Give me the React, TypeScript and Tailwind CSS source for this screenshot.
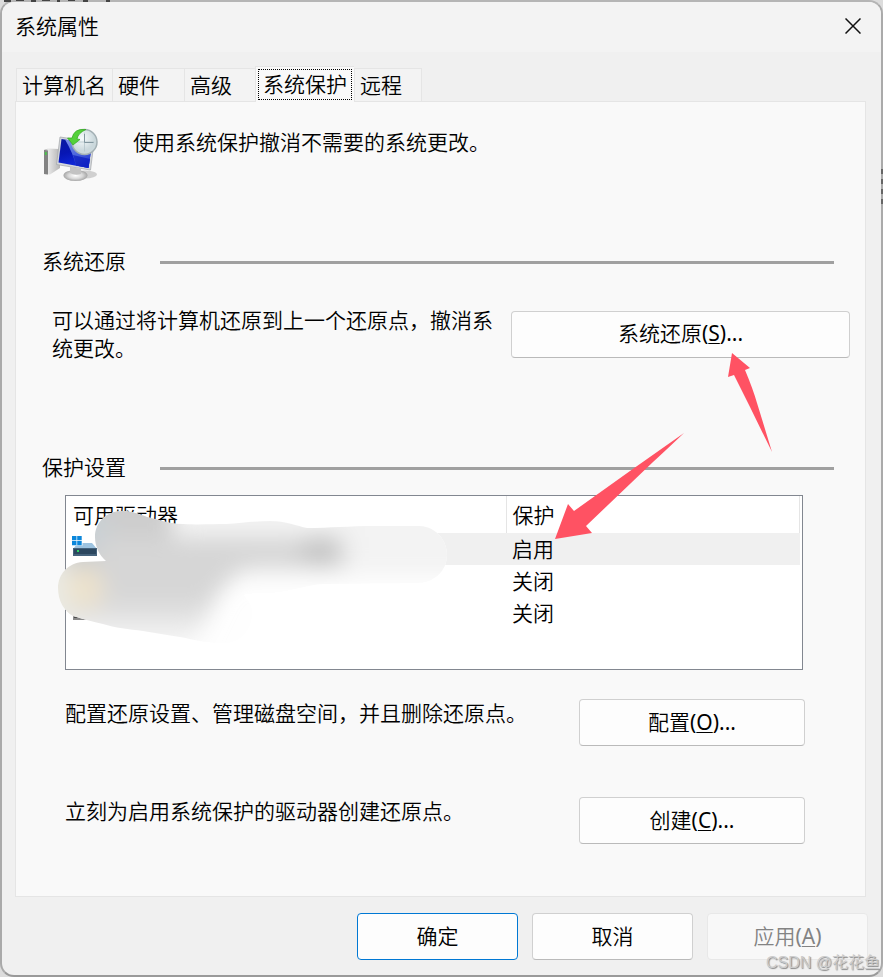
import { useState } from "react";
import type { ReactNode } from "react";
import clsx from "clsx";

const tabs = [
  { id: "computer", label: "计算机名", size: "w-[96px]" },
  { id: "hardware", label: "硬件", size: "w-[72px]" },
  { id: "advanced", label: "高级", size: "w-[71px]" },
  { id: "protection", label: "系统保护", size: "w-[99px]" },
  { id: "remote", label: "远程", size: "w-[68px]" },
];

const drives = [
  { id: "c", status: "启用", icon: <SystemDriveIcon /> },
  { id: "d", status: "关闭", icon: null },
  { id: "e", status: "关闭", icon: <DriveIcon /> },
];

type PushButtonProps = {
  children: ReactNode;
  className?: string;
  primary?: boolean;
  disabled?: boolean;
};

function PushButton({ children, className, primary, disabled }: PushButtonProps) {
  return (
    <button
      type="button"
      disabled={disabled}
      className={clsx(
        "h-[47px] shrink-0 rounded border pb-0.5 leading-7",
        primary && "border-[#0078d4] bg-[#fdfdfd]",
        disabled && "border-[#e8e8e8] bg-[#f8f8f8] text-[#838383]",
        !primary && !disabled && "border-[#d0d0d0] border-b-[#bababa] bg-[#fdfdfd]",
        className
      )}
    >
      {children}
    </button>
  );
}

function Mnemonic({ letter, dots }: { letter: string; dots?: boolean }) {
  return (
    <span className="font-normal">
      (<span className="underline decoration-1 underline-offset-2">{letter}</span>){dots && "..."}
    </span>
  );
}

function SectionTitle({ children }: { children: ReactNode }) {
  return (
    <div className="ml-[26px] mr-[31px] flex items-center gap-[34px]">
      <h2 className="pb-0.5 font-[350]">{children}</h2>
      <div className="h-[3px] flex-1 bg-[#a0a0a0]" />
    </div>
  );
}

function RestoreIcon() {
  return (
    <svg width="56" height="54" viewBox="0 0 56 54" className="shrink-0" aria-hidden="true">
      <defs>
        <linearGradient id="tower" x1="0" y1="0" x2="1" y2="0">
          <stop offset="0" stopColor="#8d8d8d" />
          <stop offset="0.25" stopColor="#e9e9e9" />
          <stop offset="1" stopColor="#b5b5b5" />
        </linearGradient>
        <linearGradient id="screen" x1="0" y1="0" x2="0.3" y2="1">
          <stop offset="0" stopColor="#0a1a9e" />
          <stop offset="0.5" stopColor="#0716b4" />
          <stop offset="1" stopColor="#1029dc" />
        </linearGradient>
        <linearGradient id="glare" x1="0" y1="0" x2="0.6" y2="1">
          <stop offset="0" stopColor="#7d94ea" />
          <stop offset="0.6" stopColor="#4a63dc" />
          <stop offset="1" stopColor="#1c33d2" />
        </linearGradient>
        <radialGradient id="stand">
          <stop offset="0" stopColor="#ffffff" />
          <stop offset="0.6" stopColor="#d8d8d8" />
          <stop offset="1" stopColor="#a6a6a6" />
        </radialGradient>
        <radialGradient id="clock" cx="0.4" cy="0.35">
          <stop offset="0" stopColor="#f8fcfd" />
          <stop offset="1" stopColor="#cbd8dc" />
        </radialGradient>
      </defs>
      <ellipse cx="41" cy="46.500" rx="12" ry="4" fill="#d0d0d0" />
      <path d="M0 22 L4 20.500 L16 21 L16 40 L6 46.500 L0 46 Z" fill="url(#tower)" />
      <path d="M0 22 L4 22.500 L4 46.500 L0 46 Z" fill="#838383" />
      <rect x="0.800" y="24" width="2" height="3" fill="#4fbf4f" />
      <ellipse cx="31.500" cy="47.500" rx="12" ry="5.500" fill="url(#stand)" />
      <path d="M26 39 L37 41 L37 46 Q31 48 26 45 Z" fill="#c3c3c3" />
      <path d="M16 9 L50 14 L46.500 42 L12.500 36.500 Z" fill="#d5d8dc" stroke="#a2a5a8" strokeWidth="0.700" />
      <path d="M17.500 11 L48 16 L44.500 40 L14.500 34.500 Z" fill="url(#screen)" />
      <path d="M21 11.500 L48 16 L44.500 40 L32 37.500 Q29 25 21 11.500 Z" fill="url(#glare)" />
      <path d="M32 37.500 Q31 32 29 27 L46 31 L44.500 40 Z" fill="#0919bd" opacity="0.700" />
      <circle cx="40.500" cy="14" r="12.500" fill="url(#clock)" stroke="#a3b0b4" strokeWidth="1.500" />
      <path d="M40.500 4.500v19M31 14h19" stroke="#b5c5ca" strokeWidth="0.800" />
      <path d="M40.500 6v8.500h9" fill="none" stroke="#8397a0" strokeWidth="1" />
      <path d="M42 1.500 Q30 0 28 10 L23.500 10 L29 17 L36 11.500 L33 11 Q34 5 42 1.500 Z" fill="#54d13a" stroke="#35a824" strokeWidth="0.700" />
    </svg>
  );
}

function SystemDriveIcon() {
  return (
    <svg width="26" height="22" viewBox="0 0 26 22" aria-hidden="true">
      <path d="M6 8h14l5 6H1Z" fill="#9dc3e0" />
      <rect x="1" y="13" width="24" height="8" fill="#46637c" />
      <rect x="2" y="14" width="22" height="5" fill="#2c475f" />
      <rect x="5" y="15" width="2" height="2" fill="#2fd765" />
      <path d="M0 0h10.500v10.500H0Z" fill="#ffffff" />
      <path d="M0 1h4.500v4.200H0ZM5.200 1h4.500v4.200H5.200ZM0 6h4.500v4.200H0ZM5.200 6h4.500v4.200H5.200Z" fill="#0c87db" />
    </svg>
  );
}

function DriveIcon() {
  return (
    <svg width="26" height="22" viewBox="0 0 26 22" aria-hidden="true">
      <path d="M6 8h14l5 6H1Z" fill="#c2c2c2" />
      <rect x="1" y="13" width="24" height="8" fill="#8a8a8a" />
      <rect x="2" y="14" width="22" height="5" fill="#4b4b4b" />
    </svg>
  );
}

// Brush stroke hiding the drive names
function Smudge() {
  return (
    <svg
      width="390"
      height="134"
      viewBox="58 510 390 134"
      className="pointer-events-none absolute -left-2 top-[14px]"
      aria-hidden="true"
    >
      <defs>
        <clipPath id="brush">
          <path d="M95 537 C95 522 107 511 122 511 C136 511 144 517 155 519 C165 522 174 524 183 524 C200 525 212 524 227 524 C242 523 256 521 270 521 C286 521 297 526 307 528 C330 528 350 526 373 526 L420 526 C436 527 447 540 447 555 C447 571 434 583 417 583 L323 584 C307 585 294 590 280 592 C266 594 252 592 243 595 C249 600 252 606 252 613 C252 631 239 644 223 643 C207 643 195 640 180 637 C167 635 155 633 143 631 C129 629 115 628 103 624 C91 621 82 619 73 616 C64 611 58 601 58 588 C58 574 68 563 83 562 L106 561 C99 555 95 546 95 537 Z" />
        </clipPath>
        <filter id="soft" x="-50%" y="-50%" width="200%" height="200%">
          <feGaussianBlur stdDeviation="11" />
        </filter>
        <linearGradient id="fade" gradientUnits="userSpaceOnUse" x1="0" y1="575" x2="0" y2="640">
          <stop offset="0" stopColor="#cecece" />
          <stop offset="0.5" stopColor="#dcdcdc" />
          <stop offset="1" stopColor="#f6f6f6" />
        </linearGradient>
      </defs>
      <g clipPath="url(#brush)">
        <rect x="58" y="510" width="390" height="134" fill="#fefefe" />
        <g filter="url(#soft)">
          <rect x="180" y="500" width="300" height="75" fill="#f3f3f3" />
          <rect x="60" y="480" width="114" height="90" fill="#cdcdcd" />
          <ellipse cx="88" cy="530" rx="22" ry="25" fill="#c9d0d4" />
          <path d="M60 560 H235 L190 650 H60 Z" fill="url(#fade)" />
          <path d="M100 537 H345 V568 H245 L215 594 H100 Z" fill="#d6d6d6" />
          <ellipse cx="320" cy="550" rx="20" ry="15" fill="#c4c4c4" />
          <ellipse cx="50" cy="595" rx="22" ry="45" fill="#eaeae4" />
          <ellipse cx="85" cy="588" rx="19" ry="22" fill="#ece2cc" />
        </g>
      </g>
    </svg>
  );
}

export default function App() {
  const [activeTab, setActiveTab] = useState("protection");

  return (
    <div className="relative bg-[#dcdcdc] font-['Noto_Sans','Noto_Sans_CJK_SC',sans-serif] text-[21px] font-[350] leading-7 text-black">
      <div className="overflow-hidden rounded-[14px] border-2 border-[#aaaaaa] border-b-[#999999] border-t-[#b5b5b5] bg-[#f0f0f0]">
        <header className="flex h-[50px] items-center justify-between bg-[#f3f3f3] pb-0.5 pl-[13px] pr-5">
          <h1 className="font-[350]">系统属性</h1>
          <button type="button" aria-label="关闭">
            <svg width="16" height="16" viewBox="0 0 16 16" aria-hidden="true">
              <path d="M0.500 0.500l15 15M15.500 0.500l-15 15" stroke="#111" strokeWidth="1.500" />
            </svg>
          </button>
        </header>

        <main className="pl-[13px] pr-[15px] pt-[14px]">
          <div role="tablist" className="flex items-end px-px">
            {tabs.map((tab) => (
              <button
                key={tab.id}
                type="button"
                role="tab"
                aria-selected={tab.id === activeTab}
                onClick={() => setActiveTab(tab.id)}
                className={clsx(
                  "shrink-0 whitespace-nowrap border-l border-t border-[#e5e5e5] text-left last:border-r",
                  tab.size,
                  tab.id === activeTab
                    ? "relative -mb-px h-9 bg-[#f9f9f9] p-0.5"
                    : "h-[33px] bg-[#f3f3f3] pl-[5px]"
                )}
              >
                {tab.id === activeTab ? (
                  <span className="block h-[31px] border border-dotted border-black pl-1">
                    {tab.label}
                  </span>
                ) : (
                  tab.label
                )}
              </button>
            ))}
          </div>

          <section role="tabpanel" className="border border-[#e5e5e5] bg-[#f9f9f9] pb-[52px] pt-[26px]">
            <div className="flex items-start gap-[33px] pl-7">
              <RestoreIcon />
              <p>使用系统保护撤消不需要的系统更改。</p>
            </div>

            <div className="mt-[65px]">
              <SectionTitle>系统还原</SectionTitle>
              <div className="mt-[29px] flex items-center gap-4 pl-9 pr-[15px]">
                <p className="flex-1">可以通过将计算机还原到上一个还原点，撤消系统更改。</p>
                <div className="relative shrink-0">
                  <PushButton className="w-[339px]">
                    系统还原
                    <Mnemonic letter="S" dots />
                  </PushButton>
                  <svg
                    width="45"
                    height="100"
                    viewBox="728 353 45 100"
                    className="pointer-events-none absolute right-[77px] top-[42px]"
                    aria-hidden="true"
                  >
                    <path d="M732 353 L750 368 L745 370 Q753 389 757 403 L772 452 L750 407 L734 375 L728 377 Z" fill="#ff5263" />
                  </svg>
                </div>
              </div>
            </div>

            <div className="mt-[91px]">
              <SectionTitle>保护设置</SectionTitle>
              <div className="relative ml-[49px] mr-[62px] mt-3 h-[175px] border border-[#828790] bg-white pr-0.5">
                <table className="w-full table-fixed border-collapse text-left">
                  <thead>
                    <tr className="h-[37px]">
                      <th className="w-[60%] border-r border-[#e5e5e5] p-0 pl-[7px] font-[350]">可用驱动器</th>
                      <th className="border-r border-[#e5e5e5] p-0 pl-[6px] font-[350]">保护</th>
                    </tr>
                  </thead>
                  <tbody>
                    {drives.map((drive) => (
                      <tr key={drive.id} className="h-8 first:bg-[#f0f0f0]">
                        <td className="p-0">
                          <div className="flex h-8 w-10 items-center bg-white pb-1.5 pl-1.5">{drive.icon}</div>
                        </td>
                        <td className="p-0 pl-[6px]">{drive.status}</td>
                      </tr>
                    ))}
                  </tbody>
                </table>
                <Smudge />
                <svg
                  width="130"
                  height="108"
                  viewBox="555 431 130 108"
                  className="pointer-events-none absolute -top-16 right-[117px]"
                  aria-hidden="true"
                >
                  <path d="M555 538 L568 503 L574 510 L630 470 L684 432 Q664 451 653 461 L586 525 L592 532 Z" fill="#ff5263" />
                </svg>
              </div>

              <div className="mt-[29px] flex flex-col gap-[51px] pl-[49px] pr-[60px]">
                <div className="flex items-start justify-between">
                  <p>配置还原设置、管理磁盘空间，并且删除还原点。</p>
                  <PushButton className="w-[226px]">
                    配置
                    <Mnemonic letter="O" dots />
                  </PushButton>
                </div>
                <div className="flex items-start justify-between">
                  <p>立刻为启用系统保护的驱动器创建还原点。</p>
                  <PushButton className="w-[226px]">
                    创建
                    <Mnemonic letter="C" dots />
                  </PushButton>
                </div>
              </div>
            </div>
          </section>
        </main>

        <footer className="flex justify-end gap-[14px] pb-[15px] pr-[13px] pt-4">
          <PushButton primary className="w-[161px]">
            确定
          </PushButton>
          <PushButton className="w-[161px]">取消</PushButton>
          <PushButton disabled className="w-[161px]">
            应用
            <Mnemonic letter="A" />
          </PushButton>
        </footer>
      </div>

      {/* Slivers of the window behind the dialog */}
      <svg width="112" height="3" className="pointer-events-none absolute left-0 top-0" aria-hidden="true">
        <path d="M4 0h7v2H4ZM16 0h8v1h-8ZM31 0h5v2h-5ZM42 0h8v1h-8ZM57 0h3v2h-3ZM68 0h7v1h-7ZM83 0h5v2h-5ZM106 0h4v2h-4Z" fill="#444" />
      </svg>
      <svg width="2" height="36" className="pointer-events-none absolute right-0 top-[169px]" aria-hidden="true">
        <path d="M0 0h2v5H0ZM0 10h2v5H0ZM0 20h2v5H0ZM0 30h2v5H0Z" fill="#666" />
      </svg>

      <span className="pointer-events-none absolute bottom-0 right-[3px] font-['Liberation_Sans','Noto_Sans_CJK_SC',sans-serif] text-[16px] text-[#cccccc] [text-shadow:1px_1px_1px_#888]">
        CSDN @花花鱼
      </span>
    </div>
  );
}
